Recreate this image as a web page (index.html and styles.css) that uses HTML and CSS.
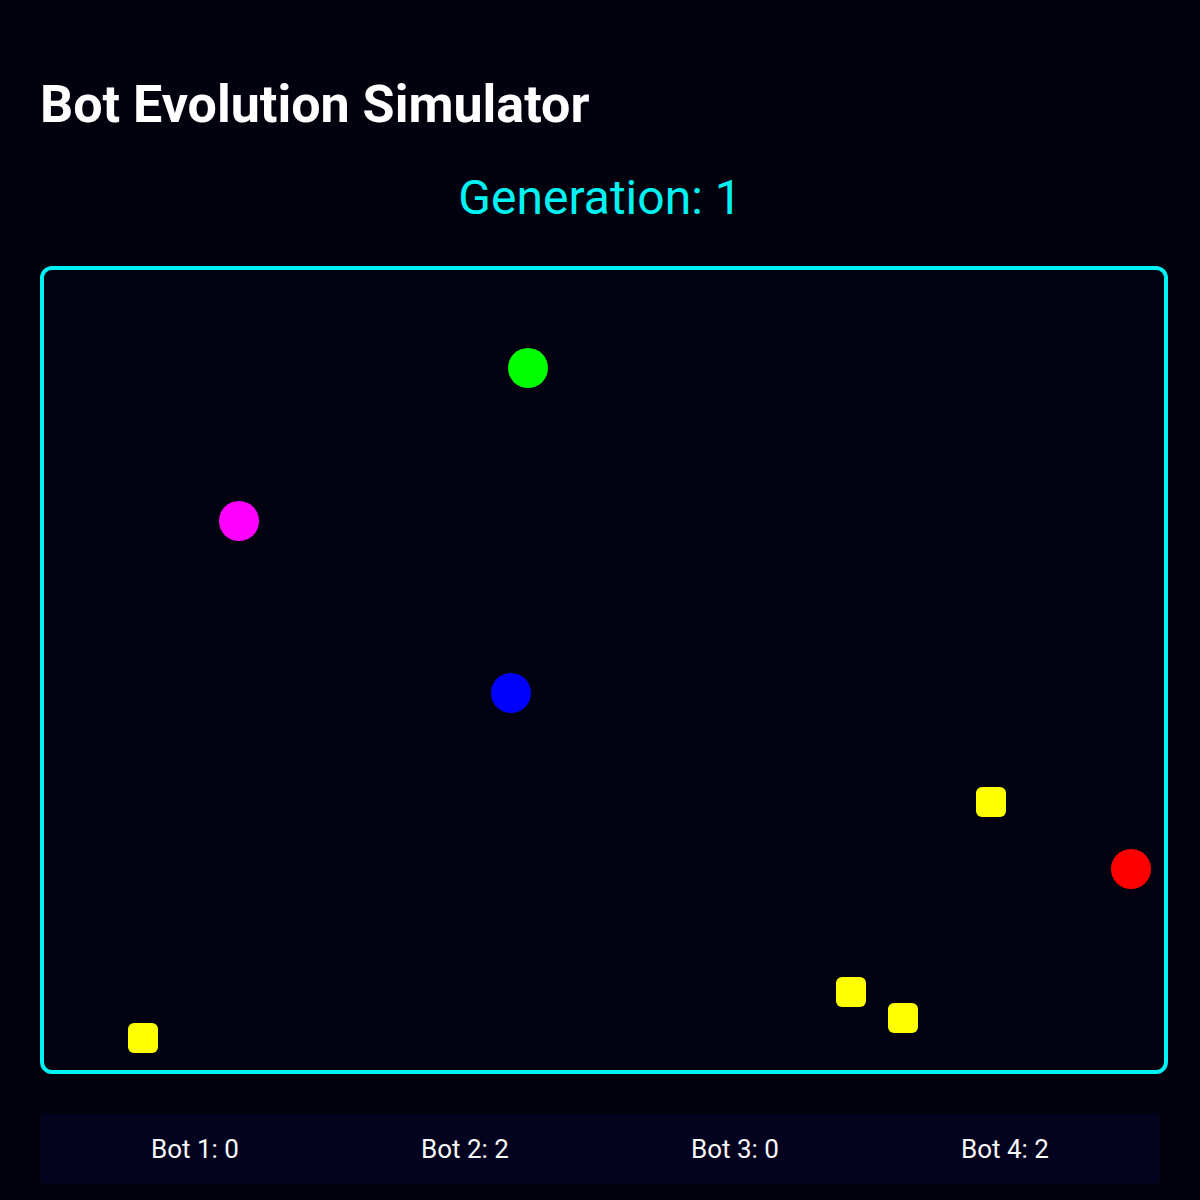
FILE: index.html
```html
<!DOCTYPE html>
<html>
<head>
<meta charset="utf-8">
<link rel="stylesheet" href="styles.css">
</head>
<body>
<div class="app">
  <h1 class="title">Bot Evolution Simulator</h1>
  <div class="gen">Generation: 1</div>
  <div class="arena">
    <svg class="field" width="1120" height="800" viewBox="0 0 1120 800">
      <circle cx="484" cy="98" r="20" fill="#00ff00"/>
      <circle cx="195" cy="251" r="20" fill="#ff00ff"/>
      <circle cx="467" cy="423" r="20" fill="#0000ff"/>
      <circle cx="1087" cy="599" r="20" fill="#ff0000"/>
      <rect x="84" y="753" width="30" height="30" rx="6" fill="#ffff00"/>
      <rect x="792" y="707" width="30" height="30" rx="6" fill="#ffff00"/>
      <rect x="844" y="733" width="30" height="30" rx="6" fill="#ffff00"/>
      <rect x="932" y="517" width="30" height="30" rx="6" fill="#ffff00"/>
    </svg>
  </div>
  <div class="scores">
    <div class="score">Bot 1: 0</div>
    <div class="score">Bot 2: 2</div>
    <div class="score">Bot 3: 0</div>
    <div class="score">Bot 4: 2</div>
  </div>
</div>
</body>
</html>
```

FILE: styles.css
```css
html, body {
  margin: 0;
  padding: 0;
  background: #02020f;
  overflow: hidden;
}
body {
  font-family: Roboto, "Liberation Sans", sans-serif;
  color: #ffffff;
}
.app {
  padding: 75px 40px 0 40px;
}
.title {
  margin: 0;
  font-size: 52px;
  line-height: 60px;
  font-weight: 700;
  color: #ffffff;
}
.gen {
  margin-top: 35px;
  text-align: center;
  font-size: 48px;
  line-height: 56px;
  color: #00f2f2;
}
.arena {
  margin-top: 40px;
  width: 1120px;
  height: 800px;
  border: 4px solid #00f2f2;
  border-radius: 12px;
  background: #020210;
}
.field {
  display: block;
}
.scores {
  margin-top: 40px;
  width: 1120px;
  height: 70px;
  box-sizing: border-box;
  padding: 0 20px;
  display: grid;
  grid-template-columns: repeat(4, 1fr);
  align-items: center;
  background: #03031f;
  border-radius: 6px;
}
.score {
  text-align: center;
  font-size: 26px;
  color: #f8f8f8;
}
```
